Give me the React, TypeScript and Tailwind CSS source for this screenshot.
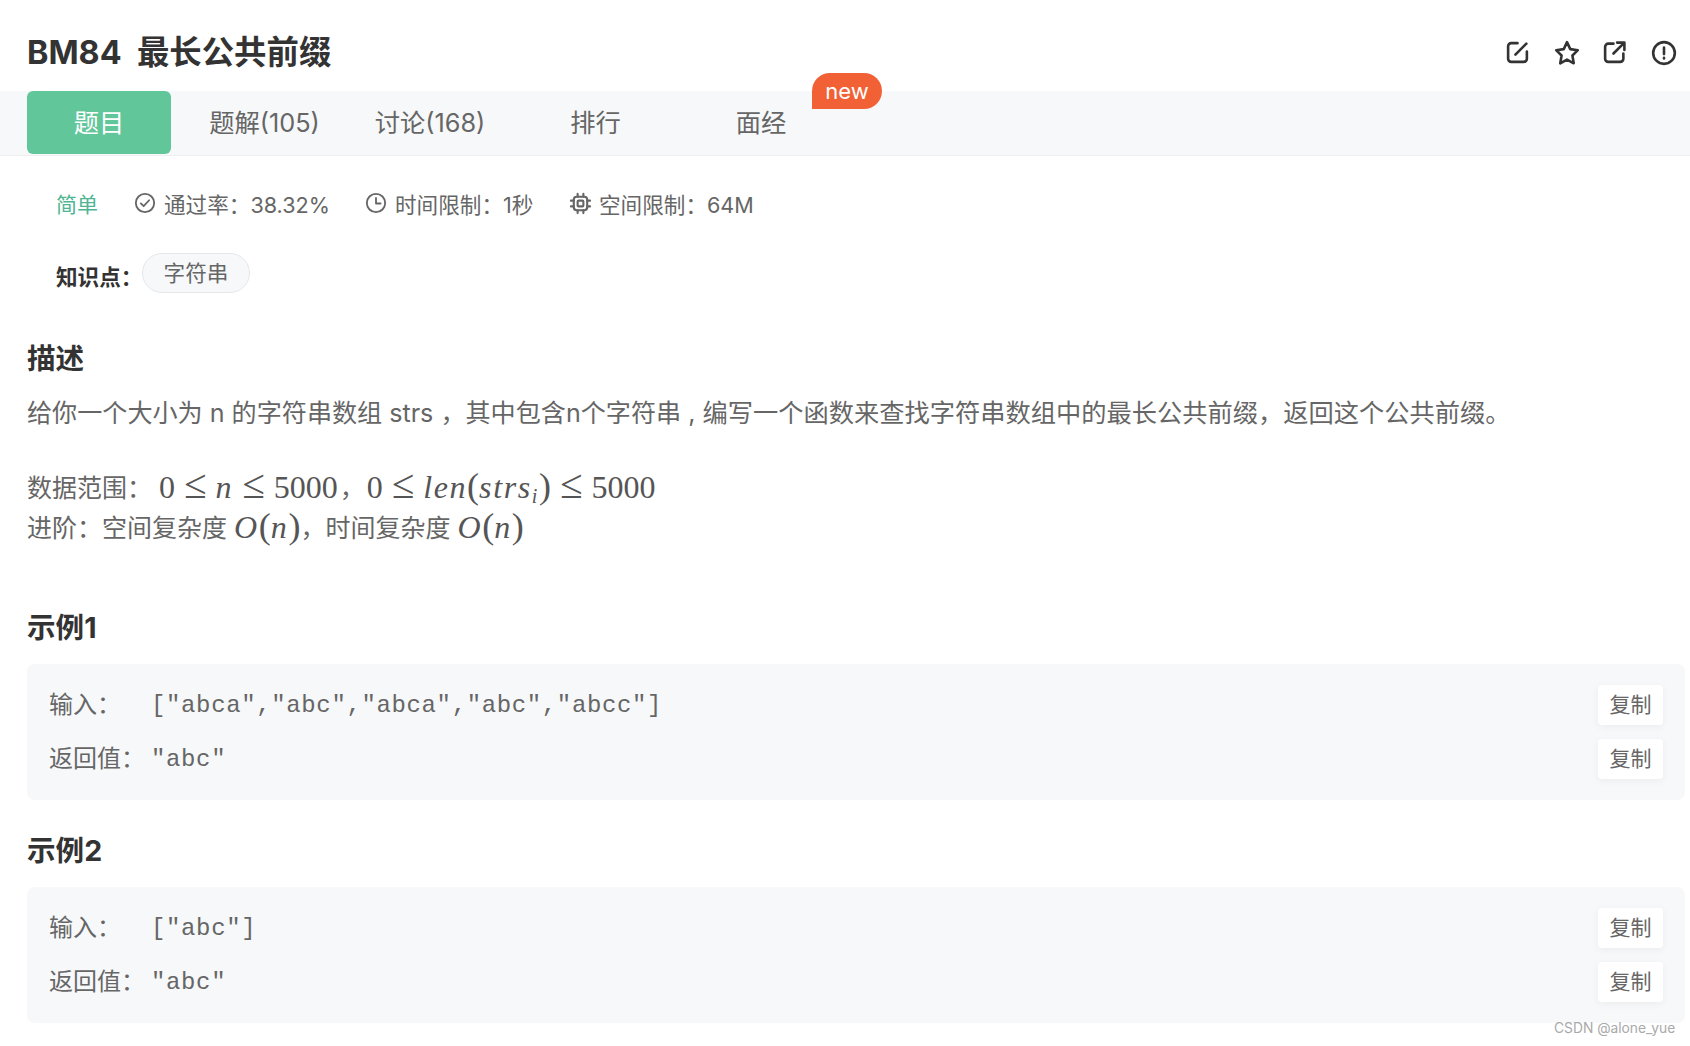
import React from "react";

const sans = "font-['Inter','Noto_Sans_CJK_SC',sans-serif]";

function Icon({ children, className }: { children: React.ReactNode; className: string }) {
  return (
    <svg viewBox="0 0 24 24" fill="none" stroke="currentColor" strokeLinecap="round" strokeLinejoin="round" className={className}>
      {children}
    </svg>
  );
}

function Sample({ title, input, className }: { title: string; input: string; className: string }) {
  return (
    <>
      <h3 className={`h-9 text-[28.6px] leading-[36px] font-bold text-[#333] ${className}`}>{title}</h3>
      <div className="mt-[18px] flex flex-col gap-[14px] rounded-lg bg-[#f7f8fa] py-[21px] pr-[22px] pl-[22px]">
        <Row label="输入：" value={input} />
        <Row label="返回值：" value={'"abc"'} />
      </div>
    </>
  );
}

function Row({ label, value }: { label: string; value: string }) {
  return (
    <div className="flex h-10 items-center">
      <span className="w-[102px] shrink-0 text-[24px] text-[#666]">{label}</span>
      <code className="flex-1 translate-y-[1px] font-['Liberation_Mono',monospace] text-[24px] font-normal tracking-[0.63px] whitespace-pre text-[#666]">{value}</code>
      <button className="h-10 w-[65px] rounded bg-white text-[21px] text-[#666] shadow-[0_2px_8px_rgba(0,0,0,0.05)]">复制</button>
    </div>
  );
}

function Tab({ label, active }: { label: string; active?: boolean }) {
  return (
    <div className={`flex h-[63px] w-[144px] items-center justify-center rounded-md pt-[1px] text-[25.3px] ${active ? "bg-[#62c69b] text-white" : "text-[#666]"}`}>
      {label}
    </div>
  );
}

function Le() {
  return <span className="mx-[9px] font-['Liberation_Serif',serif] text-[41px] leading-none">≤</span>;
}

function P({ children }: { children: React.ReactNode }) {
  return <span className="font-['Liberation_Serif',serif] text-[36px] leading-none">{children}</span>;
}

function Math({ children }: { children: React.ReactNode }) {
  return <span className="-translate-y-[2px] font-['Liberation_Serif',serif] text-[32px] text-[#555]">{children}</span>;
}
function V({ children }: { children: React.ReactNode }) {
  return <i className="font-['Liberation_Serif',serif] tracking-[1.6px]">{children}</i>;
}

export default function App() {
  return (
    <div className={`relative h-[1046px] w-full overflow-hidden bg-white ${sans}`}>
      <header className="flex h-[91px] items-center justify-between pt-[14px] pr-[13px] pl-[27px] text-[#333]">
        <h1 className="translate-y-[1px] text-[32.4px] font-bold whitespace-pre">BM84  最长公共前缀</h1>
        <div className="flex items-center gap-[24px]">
          <Icon className="h-[25px] w-[25px] stroke-[2.5]">
            <path d="M12 3H6a3 3 0 0 0-3 3v12a3 3 0 0 0 3 3h12a3 3 0 0 0 3-3v-7" />
            <path d="M20.5 3.5 10 14" />
          </Icon>
          <Icon className="mr-[-2px] h-[26px] w-[26px] stroke-[2.4]">
            <path d="m12 2 3 6.400 7 1-5 4.900 1.200 7.200-6.200-3.400-6.200 3.400 1.200-7.200-5-4.900 7-1z" />
          </Icon>
          <Icon className="h-[25px] w-[25px] stroke-[2.5]">
            <path d="M11 3.500H6a3 3 0 0 0-3 3V18a3 3 0 0 0 3 3h11.500a3 3 0 0 0 3-3v-5" />
            <path d="M11 13 21 3M14.500 2.500h7v7" />
          </Icon>
          <Icon className="h-[26px] w-[26px] stroke-[2.4]">
            <circle cx="12" cy="12" r="10" />
            <path d="M12 7v6M12 16.500v.5" />
          </Icon>
        </div>
      </header>

      <nav className="relative flex h-[65px] gap-[21.5px] border-b border-[#eeeff1] bg-[#f7f8fa] pl-[27px]">
        <Tab label="题目" active />
        <Tab label="题解(105)" />
        <Tab label="讨论(168)" />
        <Tab label="排行" />
        <Tab label="面经" />
        <span className="absolute top-[-18px] left-[812px] flex h-[36px] w-[70px] items-center justify-center rounded-[18px] rounded-bl-none bg-[#f26135] text-[22px] text-white">new</span>
      </nav>

      <div className="pr-[5px] pl-[27px]">
        <div className="mt-[33px] flex h-8 items-center pl-[29px] text-[21.6px] text-[#666]">
          <span className="w-[78px] text-[21px] text-[#4fb592]">简单</span>
          <Icon className="h-[22px] w-[22px] -translate-y-[2px] stroke-[2]">
            <circle cx="12" cy="12" r="10" />
            <path d="m7.500 12.500 3 3 6-6.500" />
          </Icon>
          <span className="ml-[8px] w-[201px]">通过率：38.32%</span>
          <Icon className="h-[22px] w-[22px] -translate-y-[2px] stroke-[2]">
            <circle cx="12" cy="12" r="10" />
            <path d="M12 6.500V12.500H17" />
          </Icon>
          <span className="ml-[8px] w-[174px]">时间限制：1秒</span>
          <Icon className="h-[23px] w-[23px] -translate-y-[2px] stroke-[2.2]">
            <rect x="5" y="5" width="14" height="14" rx="3" />
            <rect x="9" y="9" width="6" height="6" rx="1" />
            <path d="M9 2v3M15 2v3M9 19v3M15 19v3M2 9h3M2 15h3M19 9h3M19 15h3" />
          </Icon>
          <span className="ml-[7px]">空间限制：64M</span>
        </div>

        <div className="mt-[32px] flex h-10 items-center pl-[29px]">
          <span className="w-[86px] translate-y-[4px] text-[21.6px] font-bold whitespace-pre text-[#333]">知识点：</span>
          <span className="flex h-10 w-[108px] items-center justify-center rounded-full border border-[#e5e7ea] bg-[#f7f8fa] text-[21.6px] text-[#666]">字符串</span>
        </div>

        <h3 className="mt-[48px] h-9 text-[28.6px] leading-[36px] font-bold text-[#333]">描述</h3>
        <p className="mt-[18px] h-9 text-[25.1px] leading-9 whitespace-pre text-[#666]">给你一个大小为 n 的字符串数组 strs ，其中包含n个字符串 , <span className="text-[25.25px]">编写一个函数来查找字符串数组中的最长公共前缀，返回这个公共前缀。</span></p>

        <div className="mt-[38px] text-[25px] text-[#666]">
          <p className="flex h-10 items-center whitespace-pre">数据范围： <Math>0<Le /><V>n</V><Le />5000</Math><span className="ml-[2px] w-[27px]">，</span><Math>0<Le /><V>len</V><P>(</P><V>strs</V><sub className="text-[20px]"><V>i</V></sub><P>)</P><Le />5000</Math></p>
          <p className="flex h-10 items-center whitespace-pre">进阶：空间复杂度 <Math><V>O</V><P>(</P><V>n</V><P>)</P></Math>，时间复杂度 <Math><V>O</V><P>(</P><V>n</V><P>)</P></Math></p>
        </div>

        <div className="mt-[61px]">
          <Sample title="示例1" input={'["abca","abc","abca","abc","abcc"]'} className="" />
          <Sample title="示例2" input={'["abc"]'} className="mt-[33px]" />
        </div>
      </div>

      <span className="absolute top-[1018px] left-[1554px] text-[13.8px] text-[#aaa]">CSDN @alone_yue</span>
    </div>
  );
}
